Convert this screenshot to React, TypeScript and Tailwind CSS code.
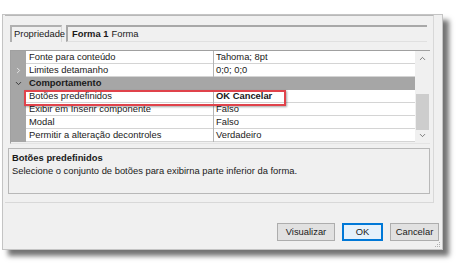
import { ChevronDown, ChevronRight, ChevronUp } from 'lucide-react';

const rows = [
    { name: 'Fonte para conteúdo', value: 'Tahoma; 8pt' },
    { name: 'Limites detamanho', value: '0;0; 0;0', expand: true },
];

const behaviourRows = [
    { name: 'Botões predefinidos', value: 'OK Cancelar', bold: true },
    { name: 'Exibir em Inserir componente', value: 'Falso' },
    { name: 'Modal', value: 'Falso' },
    { name: 'Permitir a alteração decontroles', value: 'Verdadeiro' },
];

function GridRow({ name, value, expand, bold }: { name: string; value: string; expand?: boolean; bold?: boolean }) {
    return (
        <div className="flex h-[13px]">
            <div className="w-[15px] bg-[#a6a6a6] flex items-center justify-center">
                {expand && <ChevronRight className="w-[9px] h-[9px] text-[#e8e8e8]" strokeWidth={2.5} />}
            </div>
            <div className="w-[187px] bg-white border-b border-[#d4d4d4] pl-[3px] leading-[12px] truncate">{name}</div>
            <div className="w-px bg-[#b4b4b4]" />
            <div className={`flex-1 bg-white border-b border-[#d4d4d4] pl-[2px] leading-[12px] truncate ${bold ? 'font-bold' : ''}`}>
                {value}
            </div>
        </div>
    );
}

export default function App() {
    return (
        <div className="w-[474px] h-[274px] bg-white pt-[14px] pl-[2px] text-[9.4px] text-[#1a1a1a] font-['Liberation_Sans',sans-serif]">
            {/* Dialog */}
            <div className="relative w-[441px] h-[236px] bg-[#f0f0f0] border border-[#c4c4c4] shadow-[6px_6px_5px_rgba(0,0,0,0.55)] flex flex-col">
                {/* Property panel */}
                <div className="ml-[2px] w-[429px] h-[188px] border-r border-b border-[#d8d8d8] border-t border-t-[#b8b8b8] pt-[9px] pl-[5px] pr-[3px] flex flex-col">
                    {/* Tabs */}
                    <div className="flex gap-[4px] h-[17px]">
                        <div className="w-[52px] border-t-2 border-l-2 border-[#b0b0b0] border-r border-r-[#d8d8d8] flex items-center pl-[2px]">
                            Propriedade
                        </div>
                        <div className="flex-1 border-t-2 border-l-2 border-[#a8a8a8] border-b border-b-[#e0e0e0] flex items-center pl-[4px] mr-[3px]">
                            <span className="font-bold">Forma 1</span>
                            <span className="ml-[3px]">Forma</span>
                        </div>
                    </div>

                    {/* Grid */}
                    <div className="relative mt-[8px] flex h-[94px] border-t border-l border-[#a0a0a0] border-b border-b-[#e4e4e4]">
                        <div className="flex-1 flex flex-col">
                            {rows.map((r) => (
                                <GridRow key={r.name} {...r} />
                            ))}
                            <div className="flex h-[13px] bg-[#a6a6a6] items-center">
                                <div className="w-[15px] flex items-center justify-center">
                                    <ChevronDown className="w-[9px] h-[9px] text-[#333]" strokeWidth={2.5} />
                                </div>
                                <span className="pl-[3px] font-bold">Comportamento</span>
                            </div>
                            {behaviourRows.map((r) => (
                                <GridRow key={r.name} {...r} />
                            ))}
                        </div>
                        {/* Scrollbar */}
                        <div className="w-[15px] bg-[#f0f0f0] flex flex-col items-center">
                            <ChevronUp className="w-[9px] h-[9px] mt-[3px] text-[#555]" strokeWidth={2} />
                            <div className="mt-[31px] w-[13px] h-[36px] bg-[#cdcdcd]" />
                            <div className="flex-1" />
                            <ChevronDown className="w-[9px] h-[9px] mb-[3px] text-[#555]" strokeWidth={2} />
                        </div>
                        {/* Highlight */}
                        <div className="absolute left-[13px] top-[39px] w-[262px] h-[16px] border-2 border-[#e0434b] shadow-[1px_1px_2px_rgba(0,0,0,0.35)]" />
                    </div>

                    {/* Description */}
                    <div className="mt-[4px] -ml-[2px] h-[46px] border border-[#b8b8b8] px-[3px] pt-[2px]">
                        <div className="font-bold leading-[13px]">Botões predefinidos</div>
                        <div className="leading-[13px]">Selecione o conjunto de botões para exibirna parte inferior da forma.</div>
                    </div>
                </div>

                {/* Buttons */}
                <div className="flex justify-end gap-[7px] mt-[20px] pr-[3px]">
                    <button className="w-[58px] h-[18px] bg-[#e1e1e1] border border-[#adadad] text-[9.4px] text-[#1a1a1a]">Visualizar</button>
                    <button className="w-[41px] h-[18px] bg-[#e5f1fb] border-2 border-[#0078d7] text-[9.4px] text-[#1a1a1a]">OK</button>
                    <button className="w-[49px] h-[18px] bg-[#e1e1e1] border border-[#adadad] text-[9.4px] text-[#1a1a1a]">Cancelar</button>
                </div>

                {/* Resize grip */}
                <svg className="absolute right-[1px] bottom-[1px]" width="8" height="8" viewBox="0 0 8 8">
                    <rect x="6" y="2" width="1" height="1" fill="#b0b0b0" />
                    <rect x="4" y="4" width="1" height="1" fill="#b0b0b0" />
                    <rect x="6" y="4" width="1" height="1" fill="#b0b0b0" />
                    <rect x="2" y="6" width="1" height="1" fill="#b0b0b0" />
                    <rect x="4" y="6" width="1" height="1" fill="#b0b0b0" />
                    <rect x="6" y="6" width="1" height="1" fill="#b0b0b0" />
                </svg>
            </div>
        </div>
    );
}
